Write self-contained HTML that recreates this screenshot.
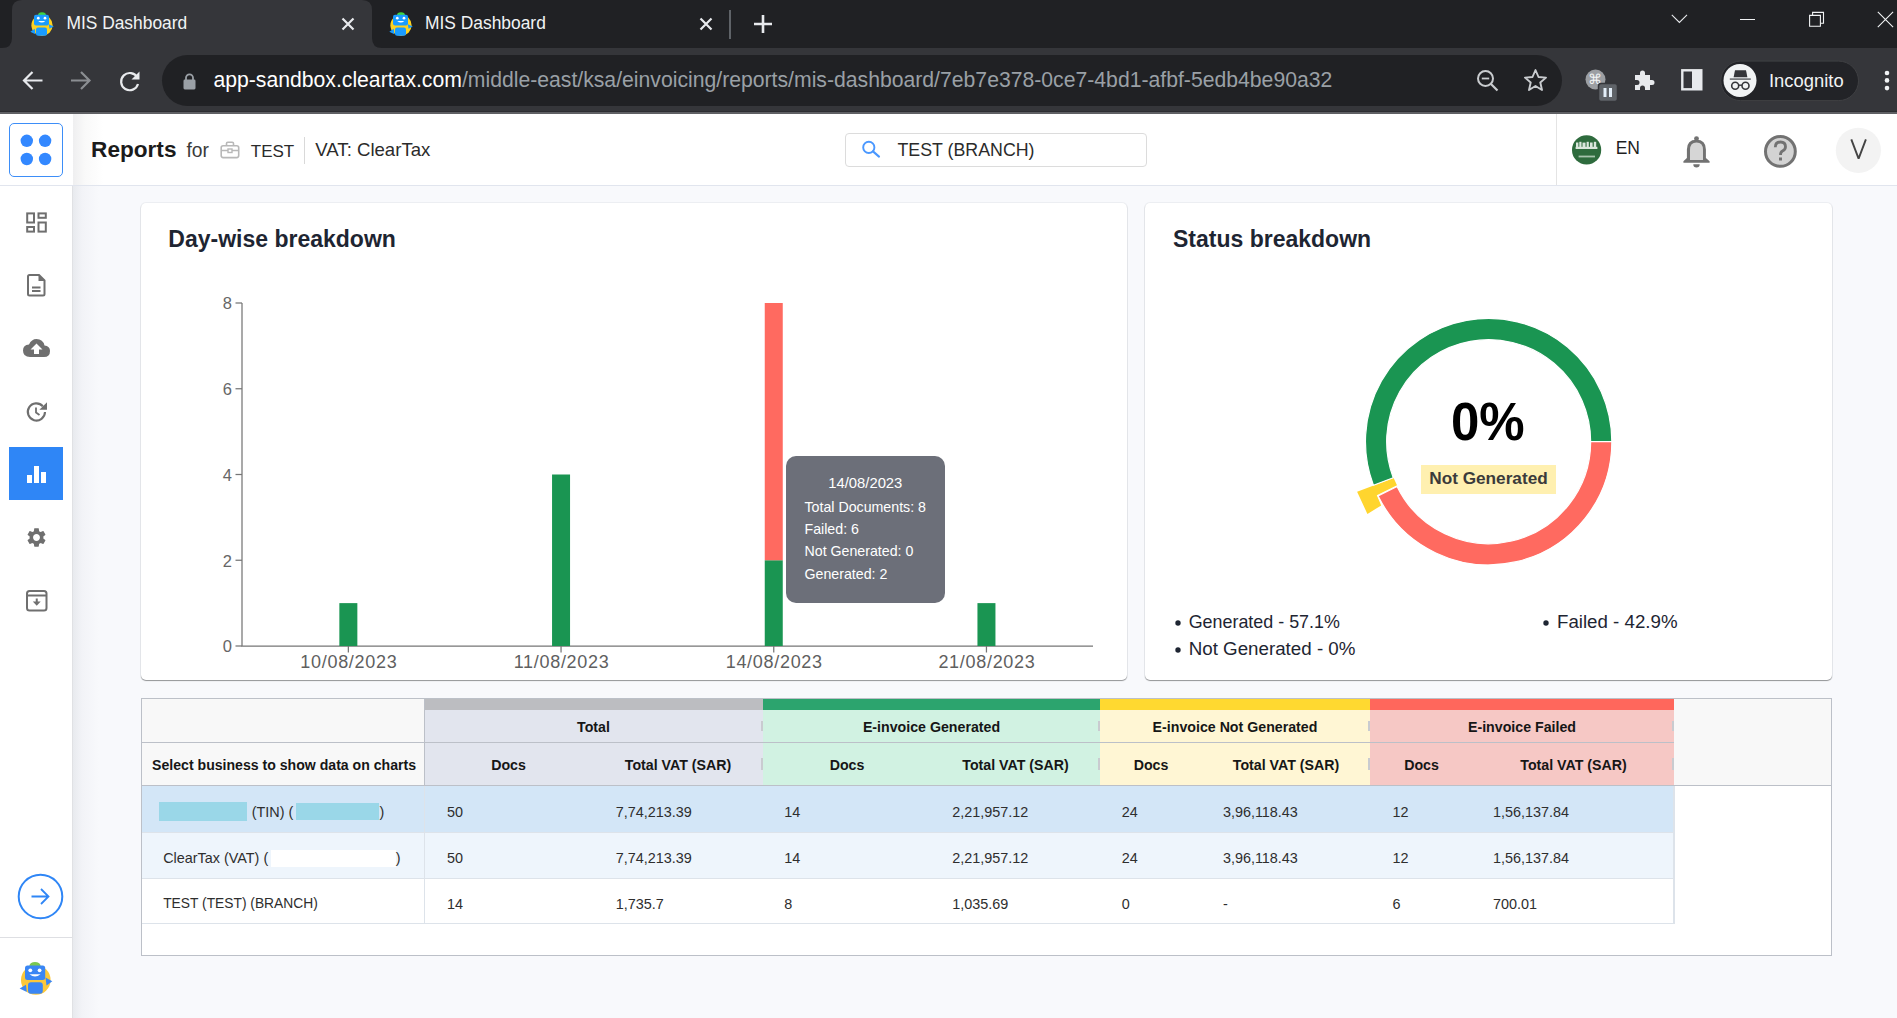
<!DOCTYPE html>
<html><head><meta charset="utf-8"><style>
*{box-sizing:border-box;margin:0;padding:0}
html,body{width:1897px;height:1018px;overflow:hidden;background:#f8f9fc;font-family:"Liberation Sans",sans-serif}
.a{position:absolute}
.t{position:absolute;white-space:nowrap;line-height:1}
svg{position:absolute;overflow:visible}
</style></head><body>
<div class="a" style="left:0px;top:0px;width:1897px;height:48px;background:#202124;"></div>
<div class="a" style="left:0px;top:48px;width:1897px;height:63px;background:#35363a;"></div>
<div class="a" style="left:0px;top:111px;width:1897px;height:1px;background:#2c2d31;"></div>
<div class="a" style="left:0px;top:112px;width:1897px;height:2px;background:#5f6064;"></div>
<svg style="left:0;top:0" width="400" height="48"><path d="M2 48 Q12 48 12 38 L12 10 Q12 0 22 0 L362 0 Q372 0 372 10 L372 38 Q372 48 382 48 Z" fill="#35363a"/></svg>
<div class="a" style="left:162px;top:55px;width:1400px;height:51px;background:#202124;border-radius:25.5px;"></div>
<svg style="left:30.0px;top:12.3px" width="24.0" height="24.0" viewBox="0 0 24 24">
<circle cx="12" cy="13.3" r="10.6" fill="#ffd21f"/>
<ellipse cx="12" cy="3.3" rx="4" ry="3" fill="#3fd33f"/>
<rect x="4" y="2.7" width="15" height="10.8" rx="2" fill="#1a9cff"/>
<circle cx="8.3" cy="6.2" r="1.35" fill="#fff"/><circle cx="15" cy="6.2" r="1.35" fill="#fff"/>
<path d="M8.2 8.9 Q11.7 12 15.3 8.9 Z" fill="#fff"/>
<rect x="6" y="15.6" width="11" height="8.2" rx="2" fill="#1a9cff"/>
<path d="M18.8 12.3 L23.8 14.4 L19.5 16.8 Z" fill="#1a9cff"/>
<path d="M0.3 19.8 L4.8 16.8 L5.4 22.3 Z" fill="#1a9cff"/>
</svg>
<svg style="left:389.0px;top:12.3px" width="24.0" height="24.0" viewBox="0 0 24 24">
<circle cx="12" cy="13.3" r="10.6" fill="#ffd21f"/>
<ellipse cx="12" cy="3.3" rx="4" ry="3" fill="#3fd33f"/>
<rect x="4" y="2.7" width="15" height="10.8" rx="2" fill="#1a9cff"/>
<circle cx="8.3" cy="6.2" r="1.35" fill="#fff"/><circle cx="15" cy="6.2" r="1.35" fill="#fff"/>
<path d="M8.2 8.9 Q11.7 12 15.3 8.9 Z" fill="#fff"/>
<rect x="6" y="15.6" width="11" height="8.2" rx="2" fill="#1a9cff"/>
<path d="M18.8 12.3 L23.8 14.4 L19.5 16.8 Z" fill="#1a9cff"/>
<path d="M0.3 19.8 L4.8 16.8 L5.4 22.3 Z" fill="#1a9cff"/>
</svg>
<div class="t" style="top:15.07px;font-size:17.4px;color:#f1f3f4;transform:scaleY(1.09);transform-origin:0 14.73px;left:66.40px;">MIS Dashboard</div>
<div class="t" style="top:15.07px;font-size:17.4px;color:#f1f3f4;transform:scaleY(1.09);transform-origin:0 14.73px;left:425.00px;">MIS Dashboard</div>
<svg style="left:340.8px;top:17px" width="14" height="14"><path d="M1.5 1.5 L12.5 12.5 M12.5 1.5 L1.5 12.5" stroke="#e8eaed" stroke-width="2.2"/></svg>
<svg style="left:699.4px;top:17px" width="14" height="14"><path d="M1.5 1.5 L12.5 12.5 M12.5 1.5 L1.5 12.5" stroke="#e8eaed" stroke-width="2.2"/></svg>
<div class="a" style="left:729px;top:10px;width:1.5px;height:29px;background:#5f6368;"></div>
<svg style="left:753px;top:14px" width="20" height="20"><path d="M10 1 V19 M1 10 H19" stroke="#e8eaed" stroke-width="2.6"/></svg>
<svg style="left:1670px;top:13px" width="20" height="14"><path d="M1.8 1.9 L9.4 9.5 L17 1.9" stroke="#e8eaed" fill="none" stroke-width="1.1"/></svg>
<div class="a" style="left:1740px;top:18.9px;width:15.2px;height:1.1px;background:#f1f3f4;"></div>
<svg style="left:1806px;top:9px" width="22" height="22"><path d="M3.6 6.4 H14.4 V17.3 H3.6 Z M6.6 6.4 V3.4 H17.5 V14.3 H14.4" stroke="#f1f3f4" fill="none" stroke-width="1.1"/></svg>
<svg style="left:1875px;top:9px" width="22" height="22"><path d="M2.8 2.9 L18.1 18.1 M18.1 2.9 L2.8 18.1" stroke="#f1f3f4" stroke-width="1.1"/></svg>
<svg style="left:22px;top:70px" width="22" height="21"><path d="M20.5 10.5 H3 M10.5 2 L2 10.5 L10.5 19" stroke="#e8eaed" fill="none" stroke-width="2.2"/></svg>
<svg style="left:70px;top:70px" width="22" height="21"><path d="M1 10.5 H18.5 M11 2 L19.5 10.5 L11 19" stroke="#8b8e92" fill="none" stroke-width="2.2"/></svg>
<svg style="left:118px;top:69px" width="24" height="24"><path d="M19.3 8.5 A8.6 8.6 0 1 0 20 15" stroke="#e8eaed" fill="none" stroke-width="2.2"/><path d="M21.5 2.5 V10.5 H13.5 Z" fill="#e8eaed"/></svg>
<svg style="left:183px;top:73px" width="13" height="17"><path d="M3 7 V4.8 A3.5 3.5 0 0 1 10 4.8 V7" stroke="#9aa0a6" fill="none" stroke-width="1.8"/><rect x="0.5" y="6.6" width="12" height="9.8" rx="1.3" fill="#9aa0a6"/></svg>
<div class="t" style="top:69.35px;font-size:21.2px;color:#9aa0a6;left:213.40px;"><span style="color:#fff">app-sandbox.cleartax.com</span>/middle-east/ksa/einvoicing/reports/mis-dashboard/7eb7e378-0ce7-4bd1-afbf-5edb4be90a32</div>
<svg style="left:1476px;top:69px" width="24" height="24"><circle cx="9.5" cy="9.5" r="7.5" stroke="#c9cccf" fill="none" stroke-width="2"/><path d="M15 15 L21.5 21.5" stroke="#c9cccf" stroke-width="2.2"/><path d="M5.8 9.5 H13.2" stroke="#c9cccf" stroke-width="1.8"/></svg>
<svg style="left:1523px;top:68px" width="25" height="24"><path d="M12.5 2 L15.5 9 L23 9.6 L17.3 14.5 L19 22 L12.5 18 L6 22 L7.7 14.5 L2 9.6 L9.5 9 Z" stroke="#c9cccf" fill="none" stroke-width="1.9" stroke-linejoin="round"/></svg>
<svg style="left:1585px;top:69px" width="36" height="36"><circle cx="10.5" cy="10.5" r="10" fill="#9c9fa3"/><text x="10" y="15" font-size="14" fill="#f1f3f4" text-anchor="middle" font-family="Liberation Sans">&#8984;</text><rect x="13.5" y="14.5" width="19" height="18" rx="2.5" fill="#5f6368" stroke="#35363a" stroke-width="1.5"/><rect x="18.5" y="19" width="3" height="9" fill="#e3eef8"/><rect x="24" y="19" width="3" height="9" fill="#e3eef8"/></svg>
<svg style="left:1632px;top:68px" width="24" height="24"><path d="M3 7 H8 V5 A2.5 2.5 0 0 1 13 5 V7 H18 V12 H20 A2.5 2.5 0 0 1 20 17 H18 V22 H13 V20 A2.5 2.5 0 0 0 8 20 V22 H3 V17 H5 A2.5 2.5 0 0 0 5 12 H3 Z" fill="#e8eaed"/></svg>
<svg style="left:1681px;top:69px" width="22" height="22"><rect x="1.3" y="1.3" width="19" height="19" stroke="#e8eaed" fill="none" stroke-width="2.4"/><rect x="11" y="1.3" width="9.5" height="19" fill="#e8eaed"/></svg>
<svg style="left:1715px;top:55px" width="182" height="52"><rect x="5.8" y="6.1" width="137.7" height="39.5" rx="19.75" fill="#222327" stroke="#3f4043" stroke-width="1"/><circle cx="25" cy="25.4" r="16.5" fill="#f1f3f4"/><path d="M20 15.3 H31 L32.4 22.3 H18.6 Z" fill="#35363a"/><rect x="14.8" y="23.3" width="21" height="1.6" fill="#6c6e72"/><circle cx="20.2" cy="30.7" r="3.5" stroke="#35363a" stroke-width="1.6" fill="none"/><circle cx="30.5" cy="30.7" r="3.5" stroke="#35363a" stroke-width="1.6" fill="none"/><path d="M23.7 30.2 H27" stroke="#35363a" stroke-width="1.4"/><circle cx="172" cy="18" r="2.3" fill="#f1f3f4"/><circle cx="172" cy="25.4" r="2.3" fill="#f1f3f4"/><circle cx="172" cy="33.1" r="2.3" fill="#f1f3f4"/></svg>
<div class="t" style="top:71.92px;font-size:18.4px;color:#f1f3f4;transform:scaleY(1.04);transform-origin:0 15.58px;left:1769.00px;">Incognito</div>
<div class="a" style="left:72px;top:114px;width:1825px;height:904px;background:#f8f9fc;"></div>
<div class="a" style="left:73px;top:114px;width:30px;height:904px;background:linear-gradient(90deg,#e8eaee 0px,#f2f3f7 9px,#f8f9fc 26px);"></div>
<div class="a" style="left:0px;top:114px;width:73px;height:904px;background:#fff;border-right:1px solid #e0e1e4;"></div>
<div class="a" style="left:0px;top:185px;width:72px;height:1px;background:#e1e5ee;"></div>
<div class="a" style="left:9px;top:123px;width:54px;height:54px;background:#fff;border:1.3px solid #3d8ef8;border-radius:5px;"></div>
<svg style="left:0;top:114px" width="72" height="72"><circle cx="26.8" cy="26.80000000000001" r="6.2" fill="#3388ff"/><circle cx="26.8" cy="45" r="6.2" fill="#3388ff"/><circle cx="45.1" cy="26.80000000000001" r="6.2" fill="#3388ff"/><circle cx="45.1" cy="45" r="6.2" fill="#3388ff"/></svg>
<svg style="left:26px;top:212px" width="22" height="22" fill="none" stroke="#6f6f6f" stroke-width="2"><rect x="1.2" y="1.4" width="6.8" height="9.1"/><rect x="12.5" y="1.4" width="7.3" height="4.4"/><rect x="1.2" y="15" width="6.8" height="4.6"/><rect x="12.5" y="10.5" width="7.3" height="9.1"/></svg>
<svg style="left:27px;top:274px" width="19" height="23"><path d="M2.5 1 H12 L17.5 6.5 V20 Q17.5 21.5 16 21.5 H2.5 Q1 21.5 1 20 V2.5 Q1 1 2.5 1 Z" stroke="#6f6f6f" stroke-width="2" fill="none"/><path d="M11.5 1 V7 H17.5 Z" fill="#6f6f6f"/><path d="M5 13.5 H13.5 M5 17 H13.5" stroke="#6f6f6f" stroke-width="2"/></svg>
<svg style="left:23px;top:338px" width="28" height="20"><path d="M7 19 Q0 19 0 12.5 Q0 7 6 6.5 Q8.5 1 13.5 1 Q20 1 21.5 7.5 Q27 8 27 13 Q27 19 21 19 Z" fill="#6f6f6f"/><path d="M13.5 5.5 L19.5 11.5 H16 V16 H11 V11.5 H7.5 Z" fill="#fff"/></svg>
<svg style="left:26px;top:401px" width="22" height="22"><path d="M19 11 A8.6 8.6 0 1 1 16.8 5.2" stroke="#6f6f6f" stroke-width="2.1" fill="none"/><path d="M21 1.2 V8.8 H13.4 Z" fill="#6f6f6f"/><path d="M10 6.5 V11.5 L13.5 14" stroke="#6f6f6f" stroke-width="1.8" fill="none"/></svg>
<div class="a" style="left:9px;top:447px;width:54px;height:53px;background:#2f86f6;"></div>
<div class="a" style="left:27px;top:474.5px;width:4.6px;height:8.8px;background:#fff;"></div>
<div class="a" style="left:34.2px;top:465.6px;width:4.8px;height:17.7px;background:#fff;"></div>
<div class="a" style="left:41.2px;top:471.5px;width:4.8px;height:11.8px;background:#fff;"></div>
<svg style="left:25px;top:526px" width="23" height="23" viewBox="0 0 24 24"><path fill="#6f6f6f" d="M19.14 12.94c.04-.3.06-.61.06-.94 0-.32-.02-.64-.07-.94l2.03-1.58c.18-.14.23-.41.12-.61l-1.92-3.32c-.12-.22-.37-.29-.59-.22l-2.39.96c-.5-.38-1.03-.7-1.62-.94l-.36-2.54c-.04-.24-.24-.41-.48-.41h-3.84c-.24 0-.43.17-.47.41l-.36 2.54c-.59.24-1.13.57-1.62.94l-2.39-.96c-.22-.08-.47 0-.59.22L2.74 8.87c-.12.21-.08.47.12.61l2.03 1.58c-.05.3-.09.63-.09.94s.02.64.07.94l-2.03 1.58c-.18.14-.23.41-.12.61l1.92 3.32c.12.22.37.29.59.22l2.39-.96c.5.38 1.03.7 1.62.94l.36 2.54c.05.24.24.41.48.41h3.84c.24 0 .44-.17.47-.41l.36-2.54c.59-.24 1.13-.56 1.62-.94l2.39.96c.22.08.47 0 .59-.22l1.92-3.32c.12-.22.07-.47-.12-.61l-2.01-1.58zM12 15.6c-1.98 0-3.6-1.62-3.6-3.6s1.62-3.6 3.6-3.6 3.6 1.62 3.6 3.6-1.62 3.6-3.6 3.6z"/></svg>
<svg style="left:26px;top:590px" width="22" height="22"><rect x="1" y="1" width="19.5" height="19.5" rx="2.5" stroke="#6f6f6f" stroke-width="2" fill="none"/><path d="M1 5.5 H20.5" stroke="#6f6f6f" stroke-width="2"/><path d="M10.75 8.5 V13" stroke="#6f6f6f" stroke-width="2"/><path d="M6.8 11.5 L10.75 15.8 L14.7 11.5 Z" fill="#6f6f6f"/></svg>
<svg style="left:17px;top:873px" width="47" height="47"><circle cx="23.5" cy="23.5" r="21.8" stroke="#2f86f6" stroke-width="2" fill="none"/><path d="M14.5 23.5 H31 M24 16 L31.5 23.5 L24 31" stroke="#2f86f6" stroke-width="1.8" fill="none"/></svg>
<div class="a" style="left:0px;top:937px;width:72px;height:1px;background:#dedfe3;"></div>
<svg style="left:0;top:950px" width="72" height="60">
<circle cx="35.8" cy="30" r="14.8" fill="#fcc83a"/>
<ellipse cx="35" cy="15.5" rx="5.5" ry="3.5" fill="#7ac74f"/>
<rect x="25" y="15.5" width="20.2" height="14.5" rx="2.5" fill="#3a86f4"/>
<circle cx="30.3" cy="20.3" r="1.9" fill="#fff"/><circle cx="39.6" cy="20.3" r="1.9" fill="#fff"/>
<path d="M29.5 24.2 Q35 28.8 40.5 24.2 Z" fill="#fff"/>
<rect x="28" y="32.3" width="14.8" height="11.5" rx="3" fill="#3a86f4"/>
<path d="M45.5 27.5 L52.3 31.2 L46.5 35.5 Z" fill="#3a86f4"/>
<path d="M19.6 38.5 L26 34.8 L26.8 42 Z" fill="#3a86f4"/>
</svg>
<div class="a" style="left:72px;top:114px;width:1825px;height:71px;background:#fff;"></div>
<div class="a" style="left:73px;top:114px;width:30px;height:71px;background:linear-gradient(90deg,#efeff0 0px,#f9f9f9 12px,#fff 30px);"></div>
<div class="a" style="left:72px;top:185px;width:1825px;height:1px;background:#e1e5ee;"></div>
<div class="t" style="top:138.87px;font-size:22.6px;color:#1b1b1b;font-weight:bold;left:91.10px;">Reports</div>
<div class="t" style="top:141.36px;font-size:19.3px;color:#3a3a3a;left:186.50px;">for</div>
<svg style="left:220px;top:141px" width="20" height="18"><rect x="1.2" y="4.8" width="17.5" height="11.8" rx="2" stroke="#b8b8b8" stroke-width="1.6" fill="none"/><path d="M6.5 4.8 V2.5 Q6.5 1.2 7.8 1.2 H12.2 Q13.5 1.2 13.5 2.5 V4.8 M1.2 9.5 H18.7" stroke="#b8b8b8" stroke-width="1.6" fill="none"/><rect x="8" y="8" width="4" height="3.5" stroke="#b8b8b8" stroke-width="1.4" fill="#fff"/></svg>
<div class="t" style="top:142.51px;font-size:17px;color:#2b2b2b;left:250.80px;">TEST</div>
<div class="a" style="left:304px;top:137px;width:1.3px;height:27px;background:#d9d9d9;"></div>
<div class="t" style="top:141.26px;font-size:18.6px;color:#2b2b2b;left:315.30px;">VAT: ClearTax</div>
<div class="a" style="left:845px;top:133px;width:302px;height:34px;background:#fff;border:1px solid #dcdcdc;border-radius:4px;"></div>
<svg style="left:861px;top:140px" width="21" height="20"><circle cx="7.8" cy="7.4" r="5.6" stroke="#4a98ff" stroke-width="1.9" fill="none"/><path d="M12 11.4 L18 16.6" stroke="#4a98ff" stroke-width="2.1" stroke-linecap="round"/></svg>
<div class="t" style="top:141.63px;font-size:17.8px;color:#2b2b2b;left:897.50px;">TEST (BRANCH)</div>
<div class="a" style="left:1556px;top:114px;width:1px;height:71px;background:#e4e4e4;"></div>
<svg style="left:1566px;top:130px" width="40" height="40"><circle cx="20.6" cy="19.9" r="14.6" fill="#2e6b3d"/><g fill="#e9f1ea" opacity="0.92"><rect x="9.6" y="16.8" width="21.8" height="2.2"/><rect x="10" y="12.5" width="2.4" height="5"/><rect x="13.3" y="11.8" width="2.2" height="6"/><rect x="16.5" y="12.6" width="3" height="5"/><rect x="20.6" y="11.8" width="2.2" height="6"/><rect x="24" y="12.5" width="2.6" height="5"/><rect x="27.8" y="11.8" width="2.4" height="6"/></g><rect x="12.6" y="25.6" width="16.4" height="1.8" fill="#cfe0d2" opacity="0.75"/></svg>
<div class="t" style="top:140.19px;font-size:17.5px;color:#1f1f1f;left:1615.70px;">EN</div>
<svg style="left:1676px;top:130px" width="40" height="42"><rect x="18.1" y="6.2" width="4.8" height="5" rx="2.4" fill="#727272"/><path d="M10.9 28 V19.5 Q10.9 9.7 20.4 9.7 Q29.9 9.7 29.9 19.5 V28 L33.6 31.3 V32.8 H7.4 V31.3 Z" fill="#727272"/><path d="M14 29.9 V19.8 Q14 12.4 20.5 12.4 Q27 12.4 27 19.8 V29.9 Z" fill="#d6d6d6"/><path d="M17.3 34.2 H23.7 Q23.7 37.5 20.5 37.5 Q17.3 37.5 17.3 34.2 Z" fill="#727272"/></svg>
<svg style="left:1763px;top:134px" width="35" height="35"><circle cx="17.4" cy="17.4" r="14.9" fill="#d3d3d3" stroke="#727272" stroke-width="3"/><path d="M12.3 13.2 Q12.3 8 17.4 8 Q22.5 8 22.5 12.8 Q22.5 15.5 19.5 17 Q17.5 18 17.5 21" stroke="#727272" stroke-width="2.8" fill="none"/><rect x="16" y="23.5" width="3" height="3" fill="#727272"/></svg>
<svg style="left:1835px;top:127px" width="47" height="47"><circle cx="23.4" cy="23.3" r="22.6" fill="#f3f3f3"/><path d="M16.3 12.3 L23.6 31.6 L30.9 12.3" stroke="#444" stroke-width="1.9" fill="none" stroke-linejoin="bevel"/></svg>
<div class="a" style="left:141px;top:203px;width:986px;height:477px;background:#fff;border-radius:5px;box-shadow:0 1px 1px rgba(0,0,0,.38),0 0 0 1px #eceef2;"></div>
<div class="a" style="left:1145px;top:203px;width:687px;height:477px;background:#fff;border-radius:5px;box-shadow:0 1px 1px rgba(0,0,0,.38),0 0 0 1px #eceef2;"></div>
<div class="t" style="top:227.73px;font-size:23px;color:#1e2532;font-weight:bold;left:168.30px;">Day-wise breakdown</div>
<div class="t" style="top:227.73px;font-size:23px;color:#1e2532;font-weight:bold;left:1173.00px;">Status breakdown</div>
<svg style="left:0;top:0" width="1897" height="1018"><path d="M242 303 V646 H1093" stroke="#767676" stroke-width="1.25" fill="none"/><path d="M235.5 646.00 H242" stroke="#767676" stroke-width="1.25"/><path d="M235.5 560.25 H242" stroke="#767676" stroke-width="1.25"/><path d="M235.5 474.50 H242" stroke="#767676" stroke-width="1.25"/><path d="M235.5 388.75 H242" stroke="#767676" stroke-width="1.25"/><path d="M235.5 303.00 H242" stroke="#767676" stroke-width="1.25"/><path d="M348.35 646 V652.5" stroke="#767676" stroke-width="1.25"/><path d="M561.05 646 V652.5" stroke="#767676" stroke-width="1.25"/><path d="M773.75 646 V652.5" stroke="#767676" stroke-width="1.25"/><path d="M986.45 646 V652.5" stroke="#767676" stroke-width="1.25"/><rect x="339.35" y="603.12" width="18" height="42.88" fill="#1a9552"/><rect x="552.05" y="474.50" width="18" height="171.50" fill="#1a9552"/><rect x="764.75" y="560.25" width="18" height="85.75" fill="#1a9552"/><rect x="764.75" y="303.00" width="18" height="257.25" fill="#ff6a60"/><rect x="977.45" y="603.12" width="18" height="42.88" fill="#1a9552"/></svg>
<div class="t" style="top:638.33px;font-size:16.5px;color:#666;left:-968.00px;width:1200px;text-align:right;">0</div>
<div class="t" style="top:552.58px;font-size:16.5px;color:#666;left:-968.00px;width:1200px;text-align:right;">2</div>
<div class="t" style="top:466.83px;font-size:16.5px;color:#666;left:-968.00px;width:1200px;text-align:right;">4</div>
<div class="t" style="top:381.08px;font-size:16.5px;color:#666;left:-968.00px;width:1200px;text-align:right;">6</div>
<div class="t" style="top:295.33px;font-size:16.5px;color:#666;left:-968.00px;width:1200px;text-align:right;">8</div>
<div class="t" style="top:652.96px;font-size:18px;color:#5f5f5f;letter-spacing:0.7px;left:-251.15px;width:1200px;text-align:center;">10/08/2023</div>
<div class="t" style="top:652.96px;font-size:18px;color:#5f5f5f;letter-spacing:0.7px;left:-38.45px;width:1200px;text-align:center;">11/08/2023</div>
<div class="t" style="top:652.96px;font-size:18px;color:#5f5f5f;letter-spacing:0.7px;left:174.25px;width:1200px;text-align:center;">14/08/2023</div>
<div class="t" style="top:652.96px;font-size:18px;color:#5f5f5f;letter-spacing:0.7px;left:386.95px;width:1200px;text-align:center;">21/08/2023</div>
<div class="a" style="left:786px;top:456px;width:159px;height:147px;background:#6c6f79;border-radius:10px;"></div>
<div class="t" style="top:476.07px;font-size:14.8px;color:#fff;left:265.30px;width:1200px;text-align:center;">14/08/2023</div>
<div class="t" style="top:499.58px;font-size:14.2px;color:#fff;left:804.50px;">Total Documents: 8</div>
<div class="t" style="top:521.68px;font-size:14.2px;color:#fff;left:804.50px;">Failed: 6</div>
<div class="t" style="top:543.78px;font-size:14.2px;color:#fff;left:804.50px;">Not Generated: 0</div>
<div class="t" style="top:566.68px;font-size:14.2px;color:#fff;left:804.50px;">Generated: 2</div>
<svg style="left:0;top:0" width="1897" height="1018"><path d="M1357.1 491.8 L1393.6 478 L1397 485.3 L1376.8 495.3 L1381.2 505.5 L1367.4 513.9 Z" fill="#ffd52e"/><path d="M1373.40 485.20 A123.2 123.2 0 1 1 1611.85 441.65 L1590.65 441.65 A102.0 102.0 0 1 0 1393.23 477.70 Z" fill="#1a9552" stroke="#fff" stroke-width="1.2"/><path d="M1611.85 441.65 A123.2 123.2 0 0 1 1378.01 495.85 L1397.05 486.52 A102.0 102.0 0 0 0 1590.65 441.65 Z" fill="#ff6a60" stroke="#fff" stroke-width="1.2"/></svg>
<div class="t" style="top:397.03px;font-size:51px;color:#000;transform:scaleY(1.05);transform-origin:0 43.17px;font-weight:bold;left:887.80px;width:1200px;text-align:center;">0%</div>
<div class="a" style="left:1421px;top:464.5px;width:135px;height:29px;background:#fff0b0;"></div>
<div class="t" style="top:470.24px;font-size:17.2px;color:#3b3b3b;font-weight:bold;left:888.50px;width:1200px;text-align:center;">Not Generated</div>
<svg style="left:1174.7px;top:619.8px" width="6" height="6"><circle cx="3" cy="3" r="2.7" fill="#1e2532"/></svg>
<div class="t" style="top:613.65px;font-size:17.9px;color:#1e2532;left:1188.70px;">Generated - 57.1%</div>
<svg style="left:1174.7px;top:646.7px" width="6" height="6"><circle cx="3" cy="3" r="2.7" fill="#1e2532"/></svg>
<div class="t" style="top:639.83px;font-size:18.75px;color:#1e2532;left:1188.70px;">Not Generated - 0%</div>
<svg style="left:1543px;top:620px" width="6" height="6"><circle cx="3" cy="3" r="2.7" fill="#1e2532"/></svg>
<div class="t" style="top:613.17px;font-size:18.7px;color:#1e2532;left:1557.00px;">Failed - 42.9%</div>
<div class="a" style="left:141px;top:698px;width:1691px;height:258px;background:#fff;border:1px solid #bcc0c8;"></div>
<div class="a" style="left:142px;top:699px;width:282px;height:86px;background:#f8f8f8;"></div>
<div class="a" style="left:1674px;top:699px;width:157px;height:86px;background:#f8f8f8;"></div>
<div class="a" style="left:424px;top:699px;width:339px;height:86px;background:#e2e5ee;"></div>
<div class="a" style="left:424px;top:699px;width:339px;height:11px;background:#bcbdc1;"></div>
<div class="a" style="left:763px;top:699px;width:337px;height:86px;background:#d1f2e2;"></div>
<div class="a" style="left:763px;top:699px;width:337px;height:11px;background:#2ca46e;"></div>
<div class="a" style="left:1100px;top:699px;width:270px;height:86px;background:#fff6d4;"></div>
<div class="a" style="left:1100px;top:699px;width:270px;height:11px;background:#ffd930;"></div>
<div class="a" style="left:1370px;top:699px;width:304px;height:86px;background:#f6c8c5;"></div>
<div class="a" style="left:1370px;top:699px;width:304px;height:11px;background:#ff675c;"></div>
<div class="t" style="top:720.18px;font-size:14.2px;color:#161616;font-weight:bold;left:-6.50px;width:1200px;text-align:center;">Total</div>
<div class="t" style="top:757.68px;font-size:14.2px;color:#161616;font-weight:bold;left:-91.50px;width:1200px;text-align:center;">Docs</div>
<div class="t" style="top:757.68px;font-size:14.2px;color:#161616;font-weight:bold;left:78.00px;width:1200px;text-align:center;">Total VAT (SAR)</div>
<div class="a" style="left:761.4px;top:721px;width:1.4px;height:10px;background:#c9cbd0;"></div>
<div class="a" style="left:761.4px;top:758px;width:1.4px;height:11.5px;background:#c9cbd0;"></div>
<div class="t" style="top:720.18px;font-size:14.2px;color:#161616;font-weight:bold;left:331.50px;width:1200px;text-align:center;">E-invoice Generated</div>
<div class="t" style="top:757.68px;font-size:14.2px;color:#161616;font-weight:bold;left:247.00px;width:1200px;text-align:center;">Docs</div>
<div class="t" style="top:757.68px;font-size:14.2px;color:#161616;font-weight:bold;left:415.50px;width:1200px;text-align:center;">Total VAT (SAR)</div>
<div class="a" style="left:1098.4px;top:721px;width:1.4px;height:10px;background:#c9cbd0;"></div>
<div class="a" style="left:1098.4px;top:758px;width:1.4px;height:11.5px;background:#c9cbd0;"></div>
<div class="t" style="top:720.18px;font-size:14.2px;color:#161616;font-weight:bold;left:635.00px;width:1200px;text-align:center;">E-invoice Not Generated</div>
<div class="t" style="top:757.68px;font-size:14.2px;color:#161616;font-weight:bold;left:551.00px;width:1200px;text-align:center;">Docs</div>
<div class="t" style="top:757.68px;font-size:14.2px;color:#161616;font-weight:bold;left:686.00px;width:1200px;text-align:center;">Total VAT (SAR)</div>
<div class="a" style="left:1368.4px;top:721px;width:1.4px;height:10px;background:#c9cbd0;"></div>
<div class="a" style="left:1368.4px;top:758px;width:1.4px;height:11.5px;background:#c9cbd0;"></div>
<div class="t" style="top:720.18px;font-size:14.2px;color:#161616;font-weight:bold;left:922.00px;width:1200px;text-align:center;">E-invoice Failed</div>
<div class="t" style="top:757.68px;font-size:14.2px;color:#161616;font-weight:bold;left:821.50px;width:1200px;text-align:center;">Docs</div>
<div class="t" style="top:757.68px;font-size:14.2px;color:#161616;font-weight:bold;left:973.50px;width:1200px;text-align:center;">Total VAT (SAR)</div>
<div class="a" style="left:1672.4px;top:721px;width:1.4px;height:10px;background:#c9cbd0;"></div>
<div class="a" style="left:1672.4px;top:758px;width:1.4px;height:11.5px;background:#c9cbd0;"></div>
<div class="a" style="left:142px;top:742px;width:1532px;height:1.3px;background:#bcc0c8;"></div>
<div class="a" style="left:142px;top:785px;width:1689px;height:1.3px;background:#bcc0c8;"></div>
<div class="a" style="left:423.5px;top:699px;width:1.2px;height:86px;background:#bcc0c8;"></div>
<div class="t" style="top:757.96px;font-size:14.1px;color:#161616;font-weight:bold;left:152.10px;">Select business to show data on charts</div>
<div class="a" style="left:142px;top:786px;width:1532px;height:46px;background:#d3e6f7;"></div>
<div class="a" style="left:142px;top:832px;width:1532px;height:1.5px;background:#dde3ea;"></div>
<div class="a" style="left:142px;top:833px;width:1532px;height:44.5px;background:#eef5fc;"></div>
<div class="a" style="left:142px;top:877.5px;width:1532px;height:1.5px;background:#dde3ea;"></div>
<div class="a" style="left:142px;top:923px;width:1532px;height:1.3px;background:#dde3ea;"></div>
<div class="a" style="left:423.5px;top:786px;width:1.5px;height:137px;background:#dde3ea;"></div>
<div class="a" style="left:1673px;top:786px;width:1.5px;height:138px;background:#dde3ea;"></div>
<div class="t" style="top:805.01px;font-size:14.4px;color:#2e2e2e;left:447.10px;">50</div>
<div class="t" style="top:805.01px;font-size:14.4px;color:#2e2e2e;left:615.80px;">7,74,213.39</div>
<div class="t" style="top:805.01px;font-size:14.4px;color:#2e2e2e;left:784.30px;">14</div>
<div class="t" style="top:805.01px;font-size:14.4px;color:#2e2e2e;left:952.30px;">2,21,957.12</div>
<div class="t" style="top:805.01px;font-size:14.4px;color:#2e2e2e;left:1121.70px;">24</div>
<div class="t" style="top:805.01px;font-size:14.4px;color:#2e2e2e;left:1222.90px;">3,96,118.43</div>
<div class="t" style="top:805.01px;font-size:14.4px;color:#2e2e2e;left:1392.50px;">12</div>
<div class="t" style="top:805.01px;font-size:14.4px;color:#2e2e2e;left:1493.00px;">1,56,137.84</div>
<div class="t" style="top:851.11px;font-size:14.4px;color:#2e2e2e;left:447.10px;">50</div>
<div class="t" style="top:851.11px;font-size:14.4px;color:#2e2e2e;left:615.80px;">7,74,213.39</div>
<div class="t" style="top:851.11px;font-size:14.4px;color:#2e2e2e;left:784.30px;">14</div>
<div class="t" style="top:851.11px;font-size:14.4px;color:#2e2e2e;left:952.30px;">2,21,957.12</div>
<div class="t" style="top:851.11px;font-size:14.4px;color:#2e2e2e;left:1121.70px;">24</div>
<div class="t" style="top:851.11px;font-size:14.4px;color:#2e2e2e;left:1222.90px;">3,96,118.43</div>
<div class="t" style="top:851.11px;font-size:14.4px;color:#2e2e2e;left:1392.50px;">12</div>
<div class="t" style="top:851.11px;font-size:14.4px;color:#2e2e2e;left:1493.00px;">1,56,137.84</div>
<div class="t" style="top:896.81px;font-size:14.4px;color:#2e2e2e;left:447.10px;">14</div>
<div class="t" style="top:896.81px;font-size:14.4px;color:#2e2e2e;left:615.80px;">1,735.7</div>
<div class="t" style="top:896.81px;font-size:14.4px;color:#2e2e2e;left:784.30px;">8</div>
<div class="t" style="top:896.81px;font-size:14.4px;color:#2e2e2e;left:952.30px;">1,035.69</div>
<div class="t" style="top:896.81px;font-size:14.4px;color:#2e2e2e;left:1121.70px;">0</div>
<div class="t" style="top:896.81px;font-size:14.4px;color:#2e2e2e;left:1222.90px;">-</div>
<div class="t" style="top:896.81px;font-size:14.4px;color:#2e2e2e;left:1392.50px;">6</div>
<div class="t" style="top:896.81px;font-size:14.4px;color:#2e2e2e;left:1493.00px;">700.01</div>
<div class="a" style="left:159.1px;top:802px;width:88px;height:19px;background:#9ad7e8;"></div>
<div class="t" style="top:805.01px;font-size:14.4px;color:#2e2e2e;left:251.70px;">(TIN) (</div>
<div class="a" style="left:296.2px;top:803px;width:83px;height:16.5px;background:#9ad7e8;"></div>
<div class="t" style="top:805.01px;font-size:14.4px;color:#2e2e2e;left:379.50px;">)</div>
<div class="t" style="top:851.11px;font-size:14.4px;color:#2e2e2e;left:163.20px;">ClearTax (VAT) (</div>
<div class="a" style="left:270.5px;top:850px;width:125px;height:16.5px;background:#fff;"></div>
<div class="t" style="top:851.11px;font-size:14.4px;color:#2e2e2e;left:395.80px;">)</div>
<div class="t" style="top:897.32px;font-size:13.8px;color:#2e2e2e;left:163.20px;">TEST (TEST) (BRANCH)</div>
</body></html>
